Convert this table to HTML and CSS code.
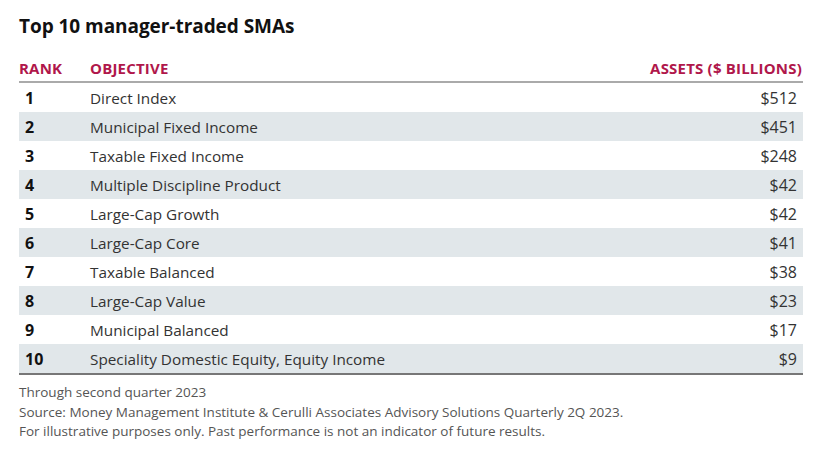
FILE: index.html
```html
<!DOCTYPE html>
<html lang="en">
<head>
<meta charset="utf-8">
<title>Top 10 manager-traded SMAs</title>
<link rel="stylesheet" href="styles.css">
</head>
<body>
<div class="card">
  <h1 class="title">Top 10 manager-traded SMAs</h1>
  <div class="table">
    <div class="row head">
      <div class="rank">RANK</div>
      <div class="obj">OBJECTIVE</div>
      <div class="val">ASSETS ($ BILLIONS)</div>
    </div>
    <div class="row"><div class="rank">1</div><div class="obj">Direct Index</div><div class="val">$512</div></div>
    <div class="row alt"><div class="rank">2</div><div class="obj">Municipal Fixed Income</div><div class="val">$451</div></div>
    <div class="row"><div class="rank">3</div><div class="obj">Taxable Fixed Income</div><div class="val">$248</div></div>
    <div class="row alt"><div class="rank">4</div><div class="obj">Multiple Discipline Product</div><div class="val">$42</div></div>
    <div class="row"><div class="rank">5</div><div class="obj">Large-Cap Growth</div><div class="val">$42</div></div>
    <div class="row alt"><div class="rank">6</div><div class="obj">Large-Cap Core</div><div class="val">$41</div></div>
    <div class="row"><div class="rank">7</div><div class="obj">Taxable Balanced</div><div class="val">$38</div></div>
    <div class="row alt"><div class="rank">8</div><div class="obj">Large-Cap Value</div><div class="val">$23</div></div>
    <div class="row"><div class="rank">9</div><div class="obj">Municipal Balanced</div><div class="val">$17</div></div>
    <div class="row alt last"><div class="rank">10</div><div class="obj">Speciality Domestic Equity, Equity Income</div><div class="val">$9</div></div>
  </div>
  <div class="notes">
    <p>Through second quarter 2023</p>
    <p>Source: Money Management Institute &amp; Cerulli Associates Advisory Solutions Quarterly 2Q 2023.</p>
    <p>For illustrative purposes only. Past performance is not an indicator of future results.</p>
  </div>
</div>
</body>
</html>
```

FILE: styles.css
```css
html, body {
  margin: 0;
  padding: 0;
  background: #ffffff;
}
body {
  font-family: "Open Sans", "Noto Sans", sans-serif;
  color: #333333;
}
.card {
  padding: 12px 22px 0 19px;
}
.title {
  margin: 0;
  font-size: 19px;
  font-weight: 700;
  line-height: 28px;
  color: #111;
  letter-spacing: -0.05px;
}
.table {
  margin-top: 18px;
}
.row {
  display: grid;
  grid-template-columns: 71px 1fr auto;
  align-items: center;
  height: 29px;
  font-size: 15.3px;
}
.rank {
  padding-left: 6px;
  font-size: 16px;
  font-weight: 700;
  color: #111;
}
.obj {
  font-weight: 400;
}
.val {
  padding-right: 6px;
  font-size: 16px;
  text-align: right;
}
.row.head {
  height: 23px;
  align-items: start;
  border-bottom: 2px solid #aaaaaa;
  line-height: 20px;
}
.row.head .rank,
.row.head .obj,
.row.head .val {
  padding-left: 0;
  padding-right: 1px;
  font-size: 15px;
  font-weight: 700;
  letter-spacing: 0.2px;
  color: #b0174b;
}
.alt {
  background: #e1e7ea;
}
.last {
  border-bottom: 2px solid #777777;
}
.notes {
  margin-top: 8px;
  font-size: 13.5px;
  line-height: 19.5px;
  color: #555;
}
.notes p {
  margin: 0;
}
```
